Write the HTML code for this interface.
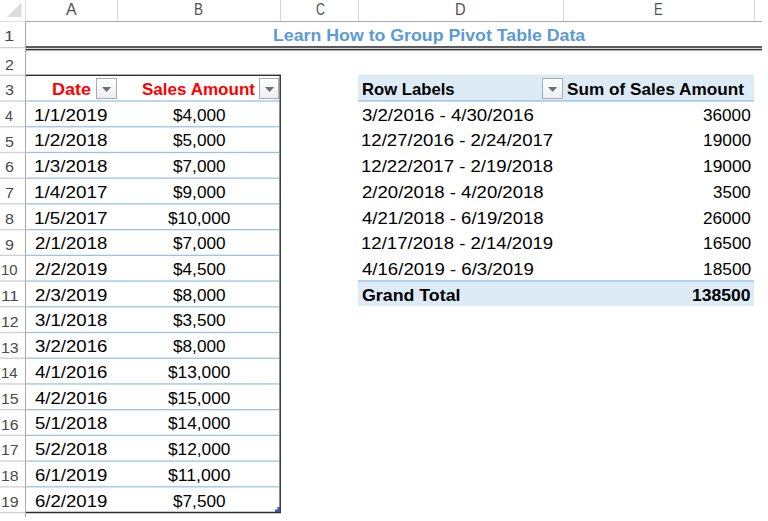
<!DOCTYPE html>
<html><head><meta charset="utf-8"><style>
html,body{margin:0;padding:0;background:#fff;}
body{width:768px;height:521px;position:relative;overflow:hidden;font-family:"Liberation Sans",sans-serif;}
#w{position:absolute;left:0;top:0;width:768px;height:521px; }
.t{position:absolute;white-space:nowrap;transform-origin:0 0;}
</style></head><body><div id="w">
<svg style="position:absolute;left:0;top:0" width="25" height="21"><polygon points="21.5,2.5 21.5,17 7,17" fill="#dcdcdc"/></svg>
<div style="position:absolute;left:117px;top:0px;width:1px;height:21px;background:#d6d6d6"></div>
<div style="position:absolute;left:280px;top:0px;width:1px;height:21px;background:#d6d6d6"></div>
<div style="position:absolute;left:358px;top:0px;width:1px;height:21px;background:#d6d6d6"></div>
<div style="position:absolute;left:563px;top:0px;width:1px;height:21px;background:#d6d6d6"></div>
<div style="position:absolute;left:754px;top:0px;width:1px;height:21px;background:#d6d6d6"></div>
<div style="position:absolute;left:25px;top:0px;width:1px;height:21px;background:#e0e0e0"></div>
<div style="position:absolute;left:0px;top:21px;width:25px;height:1px;background:#e0e0e0"></div>
<div style="position:absolute;left:25px;top:21px;width:737px;height:1px;background:#ababab"></div>
<div style="position:absolute;left:25px;top:21px;width:1px;height:496px;background:#ababab"></div>
<div style="position:absolute;left:0px;top:46px;width:25px;height:1px;background:rgba(208,208,208,0.05)"></div><div style="position:absolute;left:0px;top:47px;width:25px;height:1px;background:rgba(208,208,208,1.00)"></div><div style="position:absolute;left:0px;top:48px;width:25px;height:1px;background:rgba(208,208,208,0.25)"></div>
<div style="position:absolute;left:0px;top:74px;width:25px;height:1px;background:rgba(208,208,208,0.35)"></div><div style="position:absolute;left:0px;top:75px;width:25px;height:1px;background:rgba(208,208,208,0.95)"></div>
<div style="position:absolute;left:0px;top:100px;width:25px;height:1px;background:rgba(208,208,208,0.63)"></div><div style="position:absolute;left:0px;top:101px;width:25px;height:1px;background:rgba(208,208,208,0.67)"></div>
<div style="position:absolute;left:0px;top:126px;width:25px;height:1px;background:rgba(208,208,208,0.91)"></div><div style="position:absolute;left:0px;top:127px;width:25px;height:1px;background:rgba(208,208,208,0.39)"></div>
<div style="position:absolute;left:0px;top:151px;width:25px;height:1px;background:rgba(208,208,208,0.19)"></div><div style="position:absolute;left:0px;top:152px;width:25px;height:1px;background:rgba(208,208,208,1.00)"></div><div style="position:absolute;left:0px;top:153px;width:25px;height:1px;background:rgba(208,208,208,0.11)"></div>
<div style="position:absolute;left:0px;top:177px;width:25px;height:1px;background:rgba(208,208,208,0.47)"></div><div style="position:absolute;left:0px;top:178px;width:25px;height:1px;background:rgba(208,208,208,0.83)"></div>
<div style="position:absolute;left:0px;top:203px;width:25px;height:1px;background:rgba(208,208,208,0.75)"></div><div style="position:absolute;left:0px;top:204px;width:25px;height:1px;background:rgba(208,208,208,0.55)"></div>
<div style="position:absolute;left:0px;top:228px;width:25px;height:1px;background:rgba(208,208,208,0.03)"></div><div style="position:absolute;left:0px;top:229px;width:25px;height:1px;background:rgba(208,208,208,1.00)"></div><div style="position:absolute;left:0px;top:230px;width:25px;height:1px;background:rgba(208,208,208,0.27)"></div>
<div style="position:absolute;left:0px;top:254px;width:25px;height:1px;background:rgba(208,208,208,0.31)"></div><div style="position:absolute;left:0px;top:255px;width:25px;height:1px;background:rgba(208,208,208,0.99)"></div>
<div style="position:absolute;left:0px;top:280px;width:25px;height:1px;background:rgba(208,208,208,0.59)"></div><div style="position:absolute;left:0px;top:281px;width:25px;height:1px;background:rgba(208,208,208,0.71)"></div>
<div style="position:absolute;left:0px;top:306px;width:25px;height:1px;background:rgba(208,208,208,0.87)"></div><div style="position:absolute;left:0px;top:307px;width:25px;height:1px;background:rgba(208,208,208,0.43)"></div>
<div style="position:absolute;left:0px;top:331px;width:25px;height:1px;background:rgba(208,208,208,0.15)"></div><div style="position:absolute;left:0px;top:332px;width:25px;height:1px;background:rgba(208,208,208,1.00)"></div><div style="position:absolute;left:0px;top:333px;width:25px;height:1px;background:rgba(208,208,208,0.15)"></div>
<div style="position:absolute;left:0px;top:357px;width:25px;height:1px;background:rgba(208,208,208,0.43)"></div><div style="position:absolute;left:0px;top:358px;width:25px;height:1px;background:rgba(208,208,208,0.87)"></div>
<div style="position:absolute;left:0px;top:383px;width:25px;height:1px;background:rgba(208,208,208,0.71)"></div><div style="position:absolute;left:0px;top:384px;width:25px;height:1px;background:rgba(208,208,208,0.59)"></div>
<div style="position:absolute;left:0px;top:409px;width:25px;height:1px;background:rgba(208,208,208,0.99)"></div><div style="position:absolute;left:0px;top:410px;width:25px;height:1px;background:rgba(208,208,208,0.31)"></div>
<div style="position:absolute;left:0px;top:434px;width:25px;height:1px;background:rgba(208,208,208,0.27)"></div><div style="position:absolute;left:0px;top:435px;width:25px;height:1px;background:rgba(208,208,208,1.00)"></div>
<div style="position:absolute;left:0px;top:460px;width:25px;height:1px;background:rgba(208,208,208,0.55)"></div><div style="position:absolute;left:0px;top:461px;width:25px;height:1px;background:rgba(208,208,208,0.75)"></div>
<div style="position:absolute;left:0px;top:486px;width:25px;height:1px;background:rgba(208,208,208,0.83)"></div><div style="position:absolute;left:0px;top:487px;width:25px;height:1px;background:rgba(208,208,208,0.47)"></div>
<div style="position:absolute;left:0px;top:511px;width:25px;height:1px;background:rgba(208,208,208,0.11)"></div><div style="position:absolute;left:0px;top:512px;width:25px;height:1px;background:rgba(208,208,208,1.00)"></div><div style="position:absolute;left:0px;top:513px;width:25px;height:1px;background:rgba(208,208,208,0.19)"></div>
<div style="position:absolute;left:26px;top:46px;width:736px;height:1px;background:rgba(51,51,51,0.80)"></div><div style="position:absolute;left:26px;top:47px;width:736px;height:1px;background:rgba(51,51,51,0.80)"></div>
<div style="position:absolute;left:26px;top:48px;width:736px;height:1px;background:rgba(51,51,51,0.20)"></div><div style="position:absolute;left:26px;top:49px;width:736px;height:1px;background:rgba(51,51,51,1.00)"></div><div style="position:absolute;left:26px;top:50px;width:736px;height:1px;background:rgba(51,51,51,0.40)"></div>
<div style="position:absolute;left:358px;top:75px;width:396px;height:25px;background:#DDEBF7"></div>
<div style="position:absolute;left:358px;top:74px;width:396px;height:1px;background:rgba(221,235,247,0.5)"></div>
<div style="position:absolute;left:358px;top:100px;width:396px;height:1px;background:rgba(155,194,230,0.85)"></div><div style="position:absolute;left:358px;top:101px;width:396px;height:1px;background:rgba(155,194,230,0.65)"></div>
<div style="position:absolute;left:358px;top:282px;width:396px;height:24px;background:#DDEBF7"></div>
<div style="position:absolute;left:358px;top:280px;width:396px;height:1px;background:rgba(155,194,230,0.75)"></div><div style="position:absolute;left:358px;top:281px;width:396px;height:1px;background:rgba(155,194,230,0.75)"></div>
<div style="position:absolute;left:26px;top:100px;width:253px;height:1px;background:rgba(155,194,230,0.63)"></div><div style="position:absolute;left:26px;top:101px;width:253px;height:1px;background:rgba(155,194,230,0.67)"></div>
<div style="position:absolute;left:26px;top:126px;width:253px;height:1px;background:rgba(155,194,230,0.91)"></div><div style="position:absolute;left:26px;top:127px;width:253px;height:1px;background:rgba(155,194,230,0.39)"></div>
<div style="position:absolute;left:26px;top:151px;width:253px;height:1px;background:rgba(155,194,230,0.19)"></div><div style="position:absolute;left:26px;top:152px;width:253px;height:1px;background:rgba(155,194,230,1.00)"></div><div style="position:absolute;left:26px;top:153px;width:253px;height:1px;background:rgba(155,194,230,0.11)"></div>
<div style="position:absolute;left:26px;top:177px;width:253px;height:1px;background:rgba(155,194,230,0.47)"></div><div style="position:absolute;left:26px;top:178px;width:253px;height:1px;background:rgba(155,194,230,0.83)"></div>
<div style="position:absolute;left:26px;top:203px;width:253px;height:1px;background:rgba(155,194,230,0.75)"></div><div style="position:absolute;left:26px;top:204px;width:253px;height:1px;background:rgba(155,194,230,0.55)"></div>
<div style="position:absolute;left:26px;top:228px;width:253px;height:1px;background:rgba(155,194,230,0.03)"></div><div style="position:absolute;left:26px;top:229px;width:253px;height:1px;background:rgba(155,194,230,1.00)"></div><div style="position:absolute;left:26px;top:230px;width:253px;height:1px;background:rgba(155,194,230,0.27)"></div>
<div style="position:absolute;left:26px;top:254px;width:253px;height:1px;background:rgba(155,194,230,0.31)"></div><div style="position:absolute;left:26px;top:255px;width:253px;height:1px;background:rgba(155,194,230,0.99)"></div>
<div style="position:absolute;left:26px;top:280px;width:253px;height:1px;background:rgba(155,194,230,0.59)"></div><div style="position:absolute;left:26px;top:281px;width:253px;height:1px;background:rgba(155,194,230,0.71)"></div>
<div style="position:absolute;left:26px;top:306px;width:253px;height:1px;background:rgba(155,194,230,0.87)"></div><div style="position:absolute;left:26px;top:307px;width:253px;height:1px;background:rgba(155,194,230,0.43)"></div>
<div style="position:absolute;left:26px;top:331px;width:253px;height:1px;background:rgba(155,194,230,0.15)"></div><div style="position:absolute;left:26px;top:332px;width:253px;height:1px;background:rgba(155,194,230,1.00)"></div><div style="position:absolute;left:26px;top:333px;width:253px;height:1px;background:rgba(155,194,230,0.15)"></div>
<div style="position:absolute;left:26px;top:357px;width:253px;height:1px;background:rgba(155,194,230,0.43)"></div><div style="position:absolute;left:26px;top:358px;width:253px;height:1px;background:rgba(155,194,230,0.87)"></div>
<div style="position:absolute;left:26px;top:383px;width:253px;height:1px;background:rgba(155,194,230,0.71)"></div><div style="position:absolute;left:26px;top:384px;width:253px;height:1px;background:rgba(155,194,230,0.59)"></div>
<div style="position:absolute;left:26px;top:409px;width:253px;height:1px;background:rgba(155,194,230,0.99)"></div><div style="position:absolute;left:26px;top:410px;width:253px;height:1px;background:rgba(155,194,230,0.31)"></div>
<div style="position:absolute;left:26px;top:434px;width:253px;height:1px;background:rgba(155,194,230,0.27)"></div><div style="position:absolute;left:26px;top:435px;width:253px;height:1px;background:rgba(155,194,230,1.00)"></div>
<div style="position:absolute;left:26px;top:460px;width:253px;height:1px;background:rgba(155,194,230,0.55)"></div><div style="position:absolute;left:26px;top:461px;width:253px;height:1px;background:rgba(155,194,230,0.75)"></div>
<div style="position:absolute;left:26px;top:486px;width:253px;height:1px;background:rgba(155,194,230,0.83)"></div><div style="position:absolute;left:26px;top:487px;width:253px;height:1px;background:rgba(155,194,230,0.47)"></div>
<div style="position:absolute;left:26px;top:74px;width:255px;height:1px;background:rgba(48,48,48,0.40)"></div><div style="position:absolute;left:26px;top:75px;width:255px;height:1px;background:rgba(48,48,48,1.00)"></div>
<div style="position:absolute;left:279px;top:75px;width:1px;height:438px;background:rgba(48,48,48,0.55)"></div><div style="position:absolute;left:280px;top:75px;width:1px;height:438px;background:rgba(48,48,48,0.95)"></div>
<div style="position:absolute;left:26px;top:511px;width:255px;height:1px;background:rgba(48,48,48,0.25)"></div><div style="position:absolute;left:26px;top:512px;width:255px;height:1px;background:rgba(48,48,48,1.00)"></div><div style="position:absolute;left:26px;top:513px;width:255px;height:1px;background:rgba(48,48,48,0.25)"></div>
<svg style="position:absolute;left:275px;top:507px" width="6" height="6"><path d="M2.5 0H5V5H0V2.5H2.5Z" fill="#3C56B4"/></svg>
<div style="position:absolute;left:96px;top:78px;width:19px;height:19px;border:1px solid #acacac;background:linear-gradient(#ffffff,#eceef1)"></div><svg style="position:absolute;left:102px;top:87px" width="10" height="6"><polygon points="0,0 9.2,0 4.6,5" fill="#707070"/></svg>
<div style="position:absolute;left:259px;top:78px;width:18px;height:19px;border:1px solid #acacac;background:linear-gradient(#ffffff,#eceef1)"></div><svg style="position:absolute;left:264.6px;top:87px" width="10" height="6"><polygon points="0,0 9.2,0 4.6,5" fill="#707070"/></svg>
<div style="position:absolute;left:542px;top:78px;width:19px;height:19px;border:1px solid #acacac;background:linear-gradient(#ffffff,#eceef1)"></div><svg style="position:absolute;left:548px;top:87px" width="10" height="6"><polygon points="0,0 9.2,0 4.6,5" fill="#707070"/></svg>
<div class="t" style="left:66.20px;top:1.03px;font-size:16.5px;line-height:16.5px;color:#505050;transform:scaleX(0.9636);">A</div>
<div class="t" style="left:194.08px;top:1.03px;font-size:16.5px;line-height:16.5px;color:#505050;transform:scaleX(0.8200);">B</div>
<div class="t" style="left:315.50px;top:1.03px;font-size:16.5px;line-height:16.5px;color:#505050;transform:scaleX(0.7500);">C</div>
<div class="t" style="left:455.21px;top:1.03px;font-size:16.5px;line-height:16.5px;color:#505050;transform:scaleX(0.8909);">D</div>
<div class="t" style="left:654.32px;top:1.03px;font-size:16.5px;line-height:16.5px;color:#505050;transform:scaleX(0.7800);">E</div>
<div class="t" style="left:4.16px;top:28.48px;font-size:15.5px;line-height:15.5px;color:#4a4a4a;transform:scaleX(1.1857);">1</div>
<div class="t" style="left:5.35px;top:56.68px;font-size:15.5px;line-height:15.5px;color:#4a4a4a;transform:scaleX(1.0375);">2</div>
<div class="t" style="left:5.35px;top:82.30px;font-size:15.5px;line-height:15.5px;color:#4a4a4a;transform:scaleX(1.0375);">3</div>
<div class="t" style="left:5.35px;top:108.02px;font-size:15.5px;line-height:15.5px;color:#4a4a4a;transform:scaleX(0.9222);">4</div>
<div class="t" style="left:5.35px;top:133.74px;font-size:15.5px;line-height:15.5px;color:#4a4a4a;transform:scaleX(1.0375);">5</div>
<div class="t" style="left:5.35px;top:159.46px;font-size:15.5px;line-height:15.5px;color:#4a4a4a;transform:scaleX(1.0375);">6</div>
<div class="t" style="left:5.35px;top:185.18px;font-size:15.5px;line-height:15.5px;color:#4a4a4a;transform:scaleX(1.0375);">7</div>
<div class="t" style="left:5.35px;top:210.90px;font-size:15.5px;line-height:15.5px;color:#4a4a4a;transform:scaleX(1.0375);">8</div>
<div class="t" style="left:5.35px;top:236.62px;font-size:15.5px;line-height:15.5px;color:#4a4a4a;transform:scaleX(1.0375);">9</div>
<div class="t" style="left:1.24px;top:262.34px;font-size:15.5px;line-height:15.5px;color:#4a4a4a;transform:scaleX(0.9627);">10</div>
<div class="t" style="left:1.09px;top:288.06px;font-size:15.5px;line-height:15.5px;color:#4a4a4a;transform:scaleX(1.1057);">11</div>
<div class="t" style="left:1.18px;top:313.78px;font-size:15.5px;line-height:15.5px;color:#4a4a4a;transform:scaleX(1.0243);">12</div>
<div class="t" style="left:1.18px;top:339.50px;font-size:15.5px;line-height:15.5px;color:#4a4a4a;transform:scaleX(1.0243);">13</div>
<div class="t" style="left:1.24px;top:365.22px;font-size:15.5px;line-height:15.5px;color:#4a4a4a;transform:scaleX(0.9627);">14</div>
<div class="t" style="left:1.18px;top:390.94px;font-size:15.5px;line-height:15.5px;color:#4a4a4a;transform:scaleX(1.0243);">15</div>
<div class="t" style="left:1.18px;top:416.66px;font-size:15.5px;line-height:15.5px;color:#4a4a4a;transform:scaleX(1.0243);">16</div>
<div class="t" style="left:1.18px;top:442.38px;font-size:15.5px;line-height:15.5px;color:#4a4a4a;transform:scaleX(1.0243);">17</div>
<div class="t" style="left:1.18px;top:468.10px;font-size:15.5px;line-height:15.5px;color:#4a4a4a;transform:scaleX(1.0243);">18</div>
<div class="t" style="left:1.18px;top:493.82px;font-size:15.5px;line-height:15.5px;color:#4a4a4a;transform:scaleX(1.0243);">19</div>
<div class="t" style="left:272.56px;top:27.41px;font-size:17.0px;line-height:17.0px;color:#5B9BD5;font-weight:bold;transform:scaleX(1.0437);">Learn How to Group Pivot Table Data</div>
<div class="t" style="left:51.64px;top:80.84px;font-size:17.0px;line-height:17.0px;color:#FF0000;font-weight:bold;transform:scaleX(1.0595);">Date</div>
<div class="t" style="left:141.50px;top:80.84px;font-size:17.0px;line-height:17.0px;color:#FF0000;font-weight:bold;transform:scaleX(1.0027);">Sales Amount</div>
<div class="t" style="left:34.19px;top:106.58px;font-size:17.0px;line-height:17.0px;color:#000;transform:scaleX(1.1094);">1/1/2019</div>
<div class="t" style="left:172.96px;top:106.58px;font-size:17.0px;line-height:17.0px;color:#000;transform:scaleX(1.0105);">$4,000</div>
<div class="t" style="left:34.19px;top:132.31px;font-size:17.0px;line-height:17.0px;color:#000;transform:scaleX(1.1094);">1/2/2018</div>
<div class="t" style="left:172.96px;top:132.31px;font-size:17.0px;line-height:17.0px;color:#000;transform:scaleX(1.0105);">$5,000</div>
<div class="t" style="left:34.19px;top:158.05px;font-size:17.0px;line-height:17.0px;color:#000;transform:scaleX(1.1094);">1/3/2018</div>
<div class="t" style="left:172.96px;top:158.05px;font-size:17.0px;line-height:17.0px;color:#000;transform:scaleX(1.0105);">$7,000</div>
<div class="t" style="left:34.19px;top:183.78px;font-size:17.0px;line-height:17.0px;color:#000;transform:scaleX(1.1094);">1/4/2017</div>
<div class="t" style="left:172.96px;top:183.78px;font-size:17.0px;line-height:17.0px;color:#000;transform:scaleX(1.0105);">$9,000</div>
<div class="t" style="left:34.19px;top:209.52px;font-size:17.0px;line-height:17.0px;color:#000;transform:scaleX(1.1094);">1/5/2017</div>
<div class="t" style="left:168.02px;top:209.52px;font-size:17.0px;line-height:17.0px;color:#000;transform:scaleX(1.0159);">$10,000</div>
<div class="t" style="left:35.30px;top:235.25px;font-size:17.0px;line-height:17.0px;color:#000;transform:scaleX(1.0925);">2/1/2018</div>
<div class="t" style="left:172.96px;top:235.25px;font-size:17.0px;line-height:17.0px;color:#000;transform:scaleX(1.0105);">$7,000</div>
<div class="t" style="left:35.30px;top:260.99px;font-size:17.0px;line-height:17.0px;color:#000;transform:scaleX(1.0925);">2/2/2019</div>
<div class="t" style="left:172.96px;top:260.99px;font-size:17.0px;line-height:17.0px;color:#000;transform:scaleX(1.0105);">$4,500</div>
<div class="t" style="left:35.30px;top:286.72px;font-size:17.0px;line-height:17.0px;color:#000;transform:scaleX(1.0925);">2/3/2019</div>
<div class="t" style="left:172.96px;top:286.72px;font-size:17.0px;line-height:17.0px;color:#000;transform:scaleX(1.0105);">$8,000</div>
<div class="t" style="left:35.30px;top:312.46px;font-size:17.0px;line-height:17.0px;color:#000;transform:scaleX(1.0925);">3/1/2018</div>
<div class="t" style="left:172.96px;top:312.46px;font-size:17.0px;line-height:17.0px;color:#000;transform:scaleX(1.0105);">$3,500</div>
<div class="t" style="left:35.30px;top:338.19px;font-size:17.0px;line-height:17.0px;color:#000;transform:scaleX(1.0925);">3/2/2016</div>
<div class="t" style="left:172.96px;top:338.19px;font-size:17.0px;line-height:17.0px;color:#000;transform:scaleX(1.0105);">$8,000</div>
<div class="t" style="left:35.30px;top:363.93px;font-size:17.0px;line-height:17.0px;color:#000;transform:scaleX(1.0925);">4/1/2016</div>
<div class="t" style="left:168.02px;top:363.93px;font-size:17.0px;line-height:17.0px;color:#000;transform:scaleX(1.0159);">$13,000</div>
<div class="t" style="left:35.30px;top:389.66px;font-size:17.0px;line-height:17.0px;color:#000;transform:scaleX(1.0925);">4/2/2016</div>
<div class="t" style="left:168.02px;top:389.66px;font-size:17.0px;line-height:17.0px;color:#000;transform:scaleX(1.0159);">$15,000</div>
<div class="t" style="left:35.30px;top:415.40px;font-size:17.0px;line-height:17.0px;color:#000;transform:scaleX(1.0925);">5/1/2018</div>
<div class="t" style="left:168.02px;top:415.40px;font-size:17.0px;line-height:17.0px;color:#000;transform:scaleX(1.0159);">$14,000</div>
<div class="t" style="left:35.30px;top:441.13px;font-size:17.0px;line-height:17.0px;color:#000;transform:scaleX(1.0925);">5/2/2018</div>
<div class="t" style="left:168.02px;top:441.13px;font-size:17.0px;line-height:17.0px;color:#000;transform:scaleX(1.0159);">$12,000</div>
<div class="t" style="left:35.30px;top:466.87px;font-size:17.0px;line-height:17.0px;color:#000;transform:scaleX(1.0925);">6/1/2019</div>
<div class="t" style="left:168.02px;top:466.87px;font-size:17.0px;line-height:17.0px;color:#000;transform:scaleX(1.0373);">$11,000</div>
<div class="t" style="left:35.30px;top:492.60px;font-size:17.0px;line-height:17.0px;color:#000;transform:scaleX(1.0925);">6/2/2019</div>
<div class="t" style="left:172.96px;top:492.60px;font-size:17.0px;line-height:17.0px;color:#000;transform:scaleX(1.0105);">$7,500</div>
<div class="t" style="left:361.82px;top:80.84px;font-size:17.0px;line-height:17.0px;color:#000;font-weight:bold;transform:scaleX(0.9806);">Row Labels</div>
<div class="t" style="left:566.50px;top:80.84px;font-size:17.0px;line-height:17.0px;color:#000;font-weight:bold;transform:scaleX(1.0112);">Sum of Sales Amount</div>
<div class="t" style="left:362.30px;top:106.58px;font-size:17.0px;line-height:17.0px;color:#000;transform:scaleX(1.0947);">3/2/2016 - 4/30/2016</div>
<div class="t" style="left:703.08px;top:106.58px;font-size:17.0px;line-height:17.0px;color:#000;transform:scaleX(1.0085);">36000</div>
<div class="t" style="left:361.21px;top:132.31px;font-size:17.0px;line-height:17.0px;color:#000;transform:scaleX(1.0928);">12/27/2016 - 2/24/2017</div>
<div class="t" style="left:702.56px;top:132.31px;font-size:17.0px;line-height:17.0px;color:#000;transform:scaleX(1.0196);">19000</div>
<div class="t" style="left:361.21px;top:158.05px;font-size:17.0px;line-height:17.0px;color:#000;transform:scaleX(1.0928);">12/22/2017 - 2/19/2018</div>
<div class="t" style="left:702.56px;top:158.05px;font-size:17.0px;line-height:17.0px;color:#000;transform:scaleX(1.0196);">19000</div>
<div class="t" style="left:362.30px;top:183.78px;font-size:17.0px;line-height:17.0px;color:#000;transform:scaleX(1.0919);">2/20/2018 - 4/20/2018</div>
<div class="t" style="left:712.97px;top:183.78px;font-size:17.0px;line-height:17.0px;color:#000;transform:scaleX(0.9992);">3500</div>
<div class="t" style="left:362.30px;top:209.52px;font-size:17.0px;line-height:17.0px;color:#000;transform:scaleX(1.0919);">4/21/2018 - 6/19/2018</div>
<div class="t" style="left:703.08px;top:209.52px;font-size:17.0px;line-height:17.0px;color:#000;transform:scaleX(1.0085);">26000</div>
<div class="t" style="left:361.21px;top:235.25px;font-size:17.0px;line-height:17.0px;color:#000;transform:scaleX(1.0928);">12/17/2018 - 2/14/2019</div>
<div class="t" style="left:702.56px;top:235.25px;font-size:17.0px;line-height:17.0px;color:#000;transform:scaleX(1.0196);">16500</div>
<div class="t" style="left:362.30px;top:260.99px;font-size:17.0px;line-height:17.0px;color:#000;transform:scaleX(1.0947);">4/16/2019 - 6/3/2019</div>
<div class="t" style="left:702.56px;top:260.99px;font-size:17.0px;line-height:17.0px;color:#000;transform:scaleX(1.0196);">18500</div>
<div class="t" style="left:362.30px;top:286.72px;font-size:17.0px;line-height:17.0px;color:#000;font-weight:bold;transform:scaleX(1.0460);">Grand Total</div>
<div class="t" style="left:692.27px;top:286.72px;font-size:17.0px;line-height:17.0px;color:#000;font-weight:bold;transform:scaleX(1.0312);">138500</div>
</div></body></html>
